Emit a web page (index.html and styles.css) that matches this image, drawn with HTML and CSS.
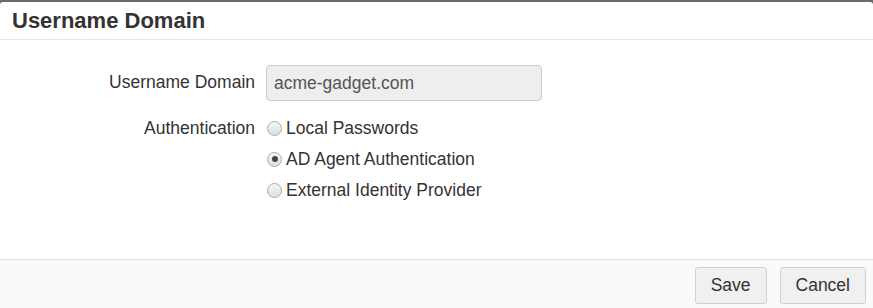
FILE: index.html
```html
<!DOCTYPE html>
<html>
<head>
<meta charset="utf-8">
<link rel="stylesheet" href="styles.css">
</head>
<body>
<div class="modal">
  <div class="modal-header">
    <h4 class="title">Username Domain</h4>
  </div>
  <div class="modal-body">
    <div class="row row-domain">
      <label class="label">Username Domain</label>
      <div class="control">
        <input class="input" type="text" value="acme-gadget.com" disabled>
      </div>
    </div>
    <div class="row row-auth">
      <label class="label">Authentication</label>
      <div class="control radios">
        <label class="radio"><input type="radio" name="auth"><span>Local Passwords</span></label>
        <label class="radio"><input type="radio" name="auth" checked><span>AD Agent Authentication</span></label>
        <label class="radio"><input type="radio" name="auth"><span>External Identity Provider</span></label>
      </div>
    </div>
  </div>
  <div class="modal-footer">
    <button class="btn">Save</button>
    <button class="btn">Cancel</button>
  </div>
</div>
</body>
</html>
```

FILE: styles.css
```css
html, body {
  margin: 0;
  padding: 0;
  height: 100%;
}
body {
  background: #6b6b6b;
  font-family: "Liberation Sans", Arial, sans-serif;
  color: #333;
  overflow: hidden;
}
.modal {
  margin-top: 2px;
  height: 306px;
  background: #fff;
  border-radius: 3px 3px 0 0;
  display: flex;
  flex-direction: column;
}
.modal-header {
  height: 38px;
  box-sizing: border-box;
  border-bottom: 1px solid #e5e5e5;
  padding: 7px 12px 0;
}
.title {
  margin: 0;
  font-size: 22px;
  font-weight: bold;
  line-height: 24px;
  color: #333;
}
.modal-body {
  flex: 1;
  padding-top: 25px;
}
.row {
  display: flex;
}
.label {
  width: 255px;
  text-align: right;
  font-size: 17.5px;
  flex: none;
}
.control {
  margin-left: 11px;
}
.row-domain .label {
  line-height: 35px;
}
.input {
  width: 276px;
  height: 36px;
  box-sizing: border-box;
  border: 1px solid #ccc;
  border-radius: 4px;
  background: #eee;
  color: #555;
  font-family: "Liberation Sans", Arial, sans-serif;
  font-size: 17.5px;
  padding: 0 7px;
  margin: 0;
}
.row-auth {
  margin-top: 15px;
}
.row-auth .label {
  line-height: 24px;
}
.radios {
  display: flex;
  flex-direction: column;
  gap: 7px;
}
.radio {
  display: flex;
  align-items: center;
  font-size: 17.5px;
  line-height: 24px;
  color: #333;
}
.radio input {
  appearance: none;
  -webkit-appearance: none;
  width: 15px;
  height: 15px;
  margin: 0 4px 0 1px;
  border: 1px solid #ababab;
  border-radius: 50%;
  background: linear-gradient(#f6f6f6, #dedede);
  box-sizing: border-box;
  position: relative;
}
.radio input:checked::after {
  content: "";
  position: absolute;
  left: 3.5px;
  top: 3.5px;
  width: 6px;
  height: 6px;
  border-radius: 50%;
  background: #444;
}
.modal-footer {
  height: 49px;
  box-sizing: border-box;
  border-top: 1px solid #e2e2e2;
  background: #fafafa;
  display: flex;
  justify-content: flex-end;
  align-items: flex-start;
  gap: 13px;
  padding: 7px 7px 0 0;
}
.btn {
  height: 37px;
  padding: 0 15px;
  border: 1px solid #d0d0d0;
  border-radius: 3px;
  background: #f0f0f0;
  color: #333;
  font-family: "Liberation Sans", Arial, sans-serif;
  font-size: 17.5px;
  margin: 0;
}
```
